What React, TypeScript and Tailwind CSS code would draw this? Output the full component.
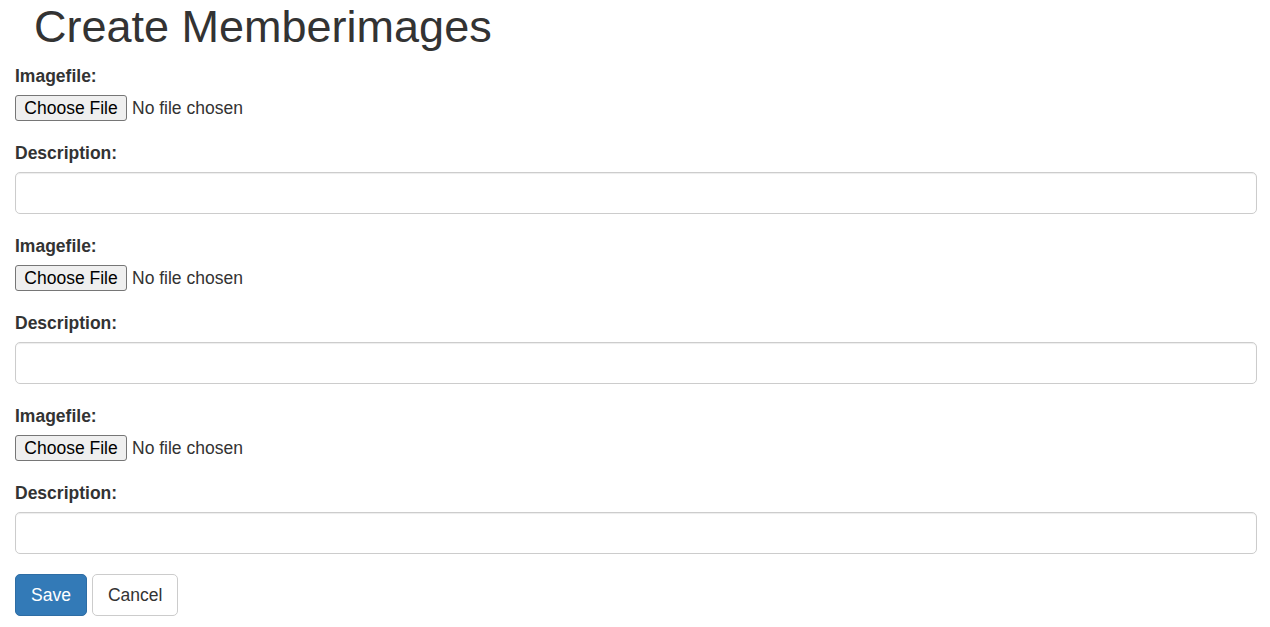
const FileField = () => (
  <div className="flex h-[26px] items-center">
    <button
      type="button"
      className="flex h-[26px] w-[112px] items-center justify-center rounded-[3px] border border-[#767676] bg-[#efefef] text-[17.5px] text-black"
    >
      Choose File
    </button>
    <span className="ml-[5px] text-[17.5px] text-[#333]">No file chosen</span>
  </div>
);

const ImageGroup = () => (
  <>
    <div className="mb-[20px]">
      <label className="mb-[6px] block text-[17.5px] font-bold leading-[25px]">Imagefile:</label>
      <FileField />
    </div>
    <div className="mb-[20px]">
      <label className="mb-[6px] block text-[17.5px] font-bold leading-[25px]">Description:</label>
      <input
        type="text"
        className="block h-[42px] w-full rounded-[5px] border border-[#ccc] bg-white px-[15px] shadow-[inset_0_1px_1px_rgba(0,0,0,0.075)] outline-none"
      />
    </div>
  </>
);

export default function App() {
  return (
    <div className="min-h-screen bg-white pl-[15px] pr-[13px] text-[#333] [font-family:'Liberation_Sans',Arial,sans-serif]">
      <h2 className="mb-[12.5px] pl-[19px] pt-[2px] text-[45px] font-normal leading-[1.1]">
        Create Memberimages
      </h2>
      <form>
        <ImageGroup />
        <ImageGroup />
        <ImageGroup />
        <div className="flex gap-[5px]">
          <button
            type="button"
            className="h-[42px] rounded-[5px] border border-[#2e6da4] bg-[#337ab7] px-[15px] text-[17.5px] text-white"
          >
            Save
          </button>
          <button
            type="button"
            className="h-[42px] rounded-[5px] border border-[#ccc] bg-white px-[15px] text-[17.5px] text-[#333]"
          >
            Cancel
          </button>
        </div>
      </form>
    </div>
  );
}
